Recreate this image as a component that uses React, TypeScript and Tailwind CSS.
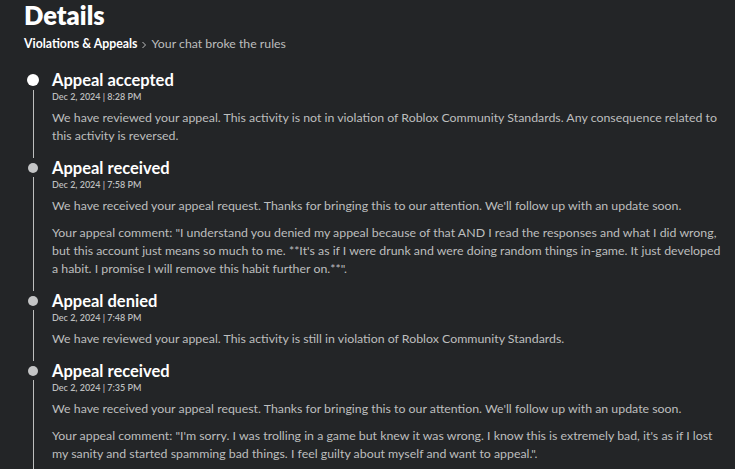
import React from 'react';

interface TimelineEntry {
  title: string;
  date: string;
  paragraphs: string[];
  current?: boolean;
}

const entries: TimelineEntry[] = [
  {
    title: 'Appeal accepted',
    date: 'Dec 2, 2024 | 8:28 PM',
    current: true,
    paragraphs: [
      'We have reviewed your appeal. This activity is not in violation of Roblox Community Standards. Any consequence related to this activity is reversed.',
    ],
  },
  {
    title: 'Appeal received',
    date: 'Dec 2, 2024 | 7:58 PM',
    paragraphs: [
      "We have received your appeal request. Thanks for bringing this to our attention. We'll follow up with an update soon.",
      'Your appeal comment: "I understand you denied my appeal because of that AND I read the responses and what I did wrong, but this account just means so much to me. **It\'s as if I were drunk and were doing random things in-game. It just developed a habit. I promise I will remove this habit further on.**".',
    ],
  },
  {
    title: 'Appeal denied',
    date: 'Dec 2, 2024 | 7:48 PM',
    paragraphs: ['We have reviewed your appeal. This activity is still in violation of Roblox Community Standards.'],
  },
  {
    title: 'Appeal received',
    date: 'Dec 2, 2024 | 7:35 PM',
    paragraphs: [
      "We have received your appeal request. Thanks for bringing this to our attention. We'll follow up with an update soon.",
      'Your appeal comment: "I\'m sorry. I was trolling in a game but knew it was wrong. I know this is extremely bad, it\'s as if I lost my sanity and started spamming bad things. I feel guilty about myself and want to appeal.".',
    ],
  },
];

const TimelineItem: React.FC<{ entry: TimelineEntry }> = ({ entry }) => (
  <div className="flex">
    <div className="flex w-[18px] flex-col items-center">
      {entry.current ? (
        <div className="mt-[1px] h-[12px] w-[12px] shrink-0 rounded-full bg-white" />
      ) : (
        <div className="mt-[2px] h-[10px] w-[10px] shrink-0 rounded-full bg-[#c4c5c6]" />
      )}
      <div className="mt-[4px] mb-[3px] w-px flex-1 bg-[#bdbebe]" />
    </div>
    <div className="ml-[10px] flex-1 pb-[16px]">
      <h3 className="text-[16.5px] font-bold leading-[14px] text-white">{entry.title}</h3>
      <p className="mt-[4px] text-[9px] font-semibold leading-[12px] text-[#bdbebe]">{entry.date}</p>
      <div className="mt-[6px] space-y-[9px]">
        {entry.paragraphs.map((text, i) => (
          <p key={i} className="text-[12.35px] leading-[18px] text-[#bdbebe]">
            {text}
          </p>
        ))}
      </div>
    </div>
  </div>
);

export default function App() {
  return (
    <div
      className="h-[469px] overflow-hidden bg-[#232527] px-6 pr-[10px]"
      style={{ fontFamily: 'Lato, "Noto Sans", sans-serif' }}
    >
      <h1 className="text-[25.5px] font-extrabold leading-[30px] text-white">Details</h1>
      <div className="mt-[6px] flex items-center text-[12.3px] leading-[16px]">
        <span className="font-bold text-white">Violations &amp; Appeals</span>
        <svg width="10" height="10" viewBox="0 0 10 10" className="mx-[2px] mt-[2px]">
          <path d="M3.5 2 L6.5 5 L3.5 8" fill="none" stroke="#bdbebe" strokeWidth="1" />
        </svg>
        <span className="text-[#bdbebe]">Your chat broke the rules</span>
      </div>
      <div className="mt-[21px]">
        {entries.map((entry, i) => (
          <TimelineItem key={i} entry={entry} />
        ))}
      </div>
    </div>
  );
}
